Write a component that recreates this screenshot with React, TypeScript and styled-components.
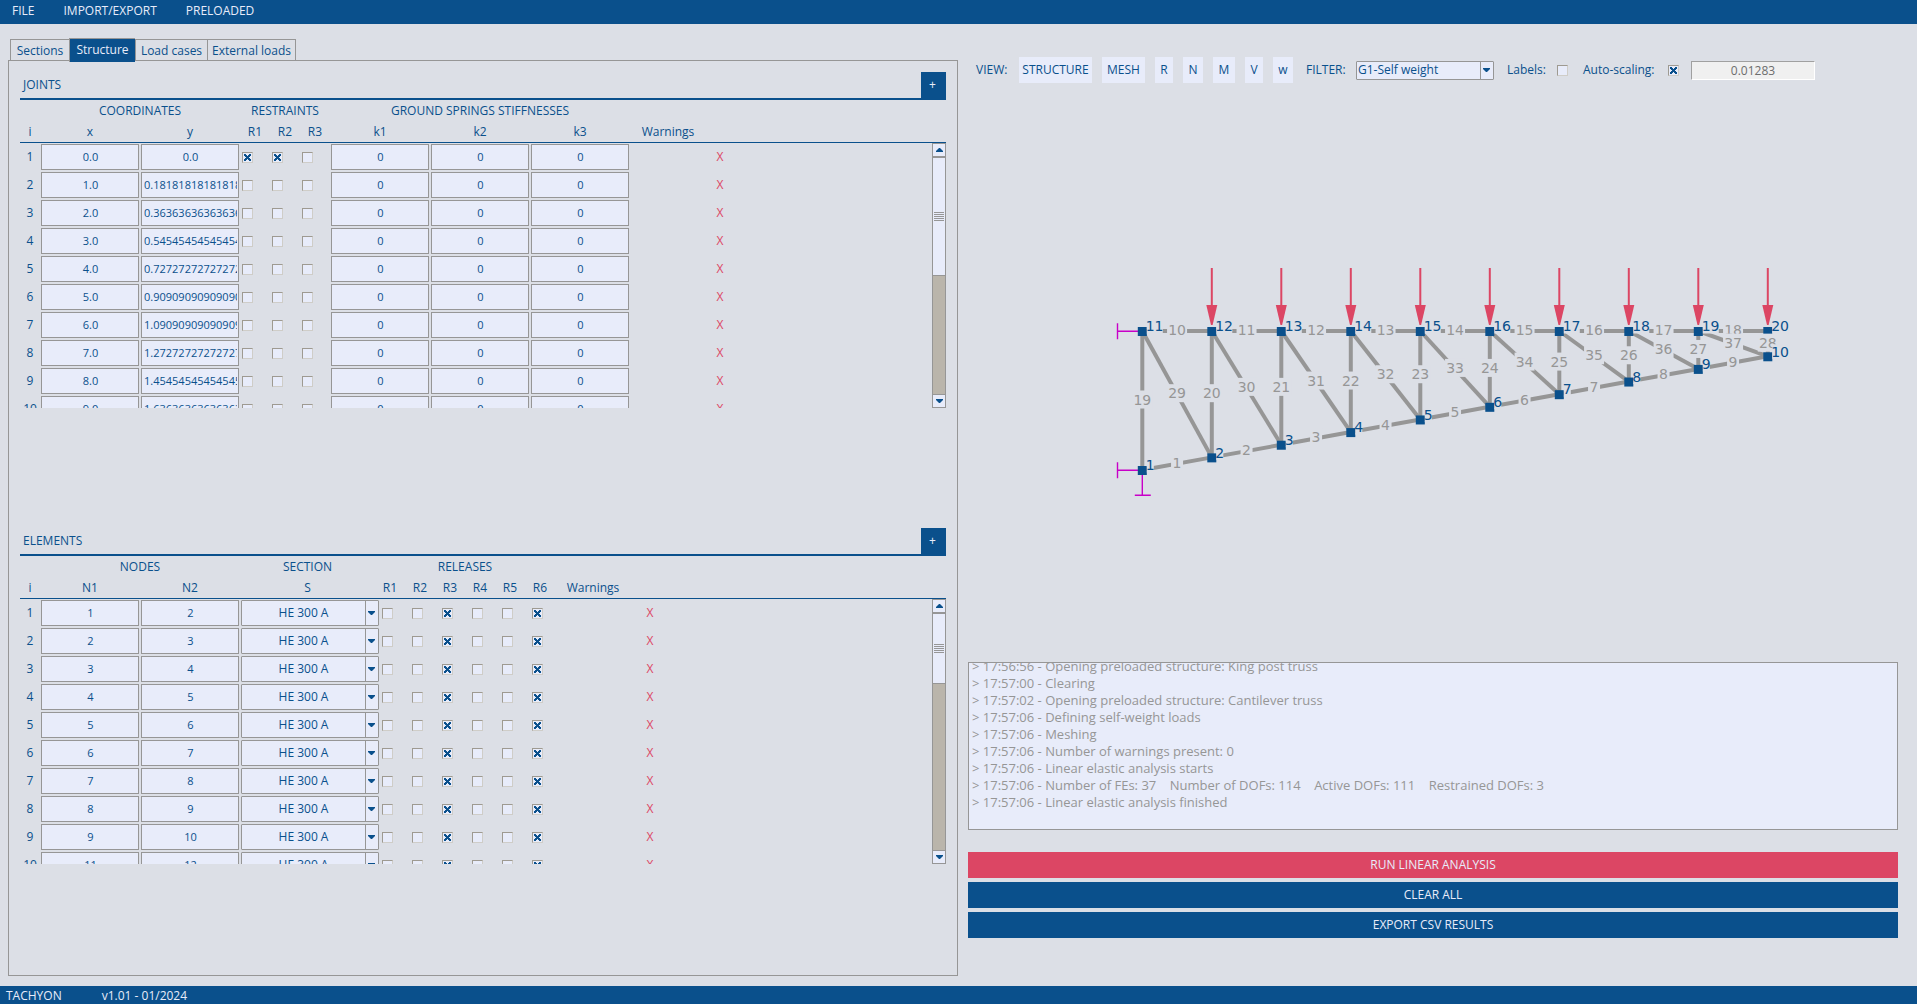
import React from "react";
import styled, { createGlobalStyle } from "styled-components";

const c = {
  blue: "#0a508c",
  bg: "#dcdfe6",
  field: "#e8ecfa",
  red: "#dc4664",
  grey: "#969696",
  trough: "#bab5ab",
  magenta: "#c800c8",
};

const svgUrl = (body: string, w: number, h: number) =>
  `url("data:image/svg+xml,${encodeURIComponent(
    `<svg xmlns='http://www.w3.org/2000/svg' width='${w}' height='${h}' viewBox='0 0 ${w} ${h}'>${body}</svg>`
  )}")`;

const crossMark = svgUrl(
  `<path d='M0 0H2V1H3V2H4V1H5V0H7V2H6V3H5V4H6V5H7V7H5V6H4V5H3V6H2V7H0V5H1V4H2V3H1V2H0Z' fill='${c.blue}'/>`,
  7,
  7
);
const downArrow = svgUrl(`<path d='M0 0H7V1L4 4H3L0 1Z' fill='${c.blue}'/>`, 7, 4);

const GlobalStyle = createGlobalStyle`
  *, *::before, *::after { box-sizing: border-box; }
  body { margin: 0; background: ${c.bg}; }
  body, button, input, select, table {
    font-family: "Open Sans", "Noto Sans", sans-serif;
    font-size: 12px;
    line-height: 16px;
    color: ${c.blue};
  }
`;

const Page = styled.div`
  min-height: 100vh;
  display: flex;
  flex-direction: column;
`;

const MenuBar = styled.nav`
  display: flex;
  height: 24px;
  padding: 0 8px;
  gap: 21px;
  background: ${c.blue};
`;

const MenuButton = styled.button`
  border: 0;
  padding: 0 4px 2px;
  background: none;
  color: ${c.field};
`;

const Main = styled.main`
  flex: 1;
  display: grid;
  grid-template-columns: minmax(0, 958fr) minmax(0, 959fr);
`;

const LeftPane = styled.div`
  display: flex;
  flex-direction: column;
  padding: 14px 0 10px 8px;
`;

const TabList = styled.div`
  display: grid;
  grid-template-columns: 59px 66px 72px 89px;
  align-items: end;
  padding-left: 2px;
`;

const Tab = styled.button<{ $active?: boolean }>`
  position: relative;
  height: ${(p) => (p.$active ? 24 : 21)}px;
  margin-bottom: ${(p) => (p.$active ? -2 : 0)}px;
  padding: ${(p) => (p.$active ? "0 0 1px" : "2px 0 0")};
  border: solid ${c.grey};
  border-width: 1px 0 0 1px;
  background: ${(p) => (p.$active ? c.blue : "none")};
  color: ${(p) => (p.$active ? c.field : c.blue)};
  white-space: nowrap;
  &:last-child { border-right-width: 1px; }
`;

const TabPanel = styled.div`
  flex: 1;
  display: grid;
  grid-template-rows: 1fr 1fr;
  border: 1px solid ${c.grey};
  padding: 0 11px 2px;
`;

const Section = styled.section`
  padding-top: 11px;
`;

const SectionHead = styled.header`
  display: flex;
  justify-content: space-between;
  border-bottom: 2px solid ${c.blue};
`;

const SectionTitle = styled.h2`
  margin: 0;
  padding: 5px 3px;
  font-size: 12px;
  font-weight: 400;
  line-height: 16px;
`;

const AddButton = styled.button`
  width: 25px;
  height: 26px;
  border: 0;
  padding: 0 2px 0 0;
  background: ${c.blue};
  color: ${c.field};
`;

const HeadTable = styled.table`
  display: block;
  border-bottom: 1px solid ${c.blue};
`;

const Rows = styled.tbody`
  display: block;
`;

const HeadRows = styled.thead`
  display: block;
`;

const GridRow = styled.tr<{ $columns: string }>`
  display: grid;
  grid-template-columns: ${(p) => p.$columns};
  align-items: center;
  height: 28px;
`;

const HeadRow = styled(GridRow)`
  height: 21px;
`;

const Th = styled.th<{ $span?: number }>`
  padding: 0;
  font-weight: 400;
  text-align: center;
  white-space: nowrap;
  grid-column: span ${(p) => p.$span ?? 1};
`;

const Td = styled.td<{ $align?: string }>`
  display: flex;
  justify-content: ${(p) => p.$align ?? "center"};
  padding: 0 1px;
`;

const BodyArea = styled.div`
  display: flex;
  height: 265px;
`;

const Viewport = styled.div`
  flex: 1;
  min-width: 0;
  overflow: hidden;
`;

const BodyTable = styled.table`
  display: block;
`;

const Field = styled.input`
  width: 100%;
  height: 26px;
  padding: 0 1px 1px 2px;
  border: 1px solid ${c.grey};
  background: ${c.field};
  font-size: 11px;
  text-align: center;
`;

const Check = styled.input.attrs({ type: "checkbox" })`
  appearance: none;
  flex: none;
  width: 11px;
  height: 11px;
  margin: 1px 1px 0;
  border: 1px solid;
  border-color: #9e9a91 #cfcdc8 #cfcdc8 #9e9a91;
  background: ${c.field} center / 7px 7px no-repeat;
  &:checked { background-image: ${crossMark}; }
`;

const Select = styled.select<{ $compact?: boolean }>`
  appearance: none;
  width: ${(p) => (p.$compact ? "138px" : "100%")};
  height: ${(p) => (p.$compact ? 19 : 26)}px;
  padding: 0 14px 0 1px;
  border: 1px solid ${c.grey};
  border-radius: 1px;
  background: ${downArrow} right 3px center no-repeat,
    linear-gradient(${c.grey}, ${c.grey}) right 12px top / 1px 100% no-repeat, ${c.field};
  text-align-last: ${(p) => (p.$compact ? "left" : "center")};
`;

const DeleteButton = styled.button`
  border: 0;
  padding: 0 4px;
  background: none;
  color: ${c.red};
`;

const Scrollbar = styled.div`
  display: flex;
  flex-direction: column;
  width: 14px;
  border: solid ${c.grey};
  border-width: 0 1px;
  background: ${c.trough};
`;

const ScrollButton = styled.button`
  display: grid;
  place-items: center;
  height: 14px;
  border: solid ${c.grey};
  border-width: 1px 0;
  padding: 0;
  background: ${c.field};
`;

const Thumb = styled.div`
  display: flex;
  flex-direction: column;
  justify-content: center;
  align-items: center;
  gap: 1px;
  border: solid ${c.grey};
  border-width: 1px 0;
  background: ${c.field};
`;

const GripLine = styled.span`
  width: 10px;
  height: 1px;
  background: ${c.grey};
`;

const Spacer = styled.div`
  flex: 1;
`;

const RightPane = styled.div`
  display: flex;
  flex-direction: column;
  padding: 33px 19px 48px 10px;
`;

const Toolbar = styled.div`
  display: flex;
  align-items: center;
  height: 26px;
  padding-left: 8px;
  white-space: nowrap;
`;

const ToolLabel = styled.label<{ $width: number }>`
  width: ${(p) => p.$width}px;
`;

const ViewButtons = styled.div`
  display: flex;
  gap: 10px;
  margin-right: 13px;
`;

const ViewButton = styled.button<{ $width: number }>`
  width: ${(p) => p.$width}px;
  height: 26px;
  border: 0;
  padding: 0;
  background: ${c.field};
`;

const ToolItem = styled.div<{ $gap: number }>`
  display: flex;
  align-items: center;
  margin-right: ${(p) => p.$gap}px;
`;

const ScaleField = styled.input`
  width: 124px;
  height: 19px;
  padding: 0;
  border: 1px solid;
  border-color: #a0a0a0 #fff #fff #a0a0a0;
  background: #f0f0f0;
  color: #6d6d6d;
  text-align: center;
`;

const Canvas = styled.svg`
  flex: 1;
  width: 100%;
  min-height: 0;
  font-family: "DejaVu Sans", sans-serif;
  font-size: 14px;
`;

const Log = styled.div`
  display: flex;
  flex-direction: column;
  justify-content: flex-end;
  height: 168px;
  padding: 0 3px 18px;
  border: 1px solid ${c.grey};
  background: ${c.field};
  color: ${c.grey};
  font-size: 13px;
  line-height: 17px;
  white-space: pre;
  overflow: hidden;
`;

const LogLine = styled.div`
  flex: none;
`;

const Actions = styled.div`
  display: grid;
  gap: 4px;
  margin-top: 22px;
`;

const ActionButton = styled.button<{ $primary?: boolean }>`
  height: 26px;
  border: 0;
  background: ${(p) => (p.$primary ? c.red : c.blue)};
  color: ${c.field};
`;

const StatusBar = styled.footer`
  display: flex;
  gap: 40px;
  height: 18px;
  padding: 2px 6px 0;
  background: ${c.blue};
  color: ${c.field};
`;

type Column = { kind: "field" | "check" | "select"; label: string };

type DataTableProps = {
  title: string;
  groups: { label: string; span: number }[];
  columns: Column[];
  headColumns: string;
  bodyColumns: string;
  rows: (string | boolean)[][];
  thumb: number;
};

function ScrollArrow({ up }: { up?: boolean }) {
  return (
    <svg width="7" height="4" viewBox="0 0 7 4" aria-hidden="true">
      <path d={up ? "M0 4H7V3L4 0H3L0 3Z" : "M0 0H7V1L4 4H3L0 1Z"} fill={c.blue} />
    </svg>
  );
}

function DataTable({ title, groups, columns, headColumns, bodyColumns, rows, thumb }: DataTableProps) {
  return (
    <Section>
      <SectionHead>
        <SectionTitle>{title}</SectionTitle>
        <AddButton>+</AddButton>
      </SectionHead>
      <HeadTable>
        <HeadRows>
          <HeadRow $columns={headColumns}>
            <Th as="td" />
            {groups.map((g) => (
              <Th key={g.label} $span={g.span}>{g.label}</Th>
            ))}
          </HeadRow>
          <HeadRow $columns={headColumns}>
            <Th>i</Th>
            {columns.map((col) => (
              <Th key={col.label}>{col.label}</Th>
            ))}
            <Th>Warnings</Th>
          </HeadRow>
        </HeadRows>
      </HeadTable>
      <BodyArea>
        <Viewport>
          <BodyTable>
            <Rows>
              {rows.map((row, r) => (
                <GridRow key={r} $columns={bodyColumns}>
                  <Td>{r + 1}</Td>
                  {columns.map((col, k) => {
                    const name = `${title} ${r + 1} ${col.label}`;
                    if (col.kind === "check")
                      return (
                        <Td key={col.label} $align="flex-start">
                          <Check aria-label={name} defaultChecked={row[k] as boolean} />
                        </Td>
                      );
                    if (col.kind === "select")
                      return (
                        <Td key={col.label}>
                          <Select aria-label={name}><option>{row[k]}</option></Select>
                        </Td>
                      );
                    return (
                      <Td key={col.label}>
                        <Field aria-label={name} defaultValue={row[k] as string} />
                      </Td>
                    );
                  })}
                  <Td />
                  <Td><DeleteButton>X</DeleteButton></Td>
                </GridRow>
              ))}
            </Rows>
          </BodyTable>
        </Viewport>
        <Scrollbar>
          <ScrollButton aria-label="Scroll up"><ScrollArrow up /></ScrollButton>
          <Thumb style={{ height: thumb }}>
            {[0, 1, 2, 3, 4].map((n) => <GripLine key={n} />)}
          </Thumb>
          <Spacer />
          <ScrollButton aria-label="Scroll down"><ScrollArrow /></ScrollButton>
        </Scrollbar>
      </BodyArea>
    </Section>
  );
}

const jointColumns: Column[] = [
  { kind: "field", label: "x" },
  { kind: "field", label: "y" },
  { kind: "check", label: "R1" },
  { kind: "check", label: "R2" },
  { kind: "check", label: "R3" },
  { kind: "field", label: "k1" },
  { kind: "field", label: "k2" },
  { kind: "field", label: "k3" },
];

const jointRows = Array.from({ length: 10 }, (_, i) => [
  `${i}.0`,
  i === 0 ? "0.0" : String((i * 2) / 11),
  i === 0,
  i === 0,
  false,
  "0",
  "0",
  "0",
]);

const elementColumns: Column[] = [
  { kind: "field", label: "N1" },
  { kind: "field", label: "N2" },
  { kind: "select", label: "S" },
  ...["R1", "R2", "R3", "R4", "R5", "R6"].map((label) => ({ kind: "check" as const, label })),
];

const elementRows = Array.from({ length: 10 }, (_, i) => {
  const first = i < 9 ? i + 1 : i + 2;
  return [String(first), String(first + 1), "HE 300 A", false, false, true, false, false, true];
});

/* Truss geometry, one unit of structure = UNIT drawing units */
const UNIT = 69.5;
const ORIGIN = { x: 1142.3, y: 470 };
type Point = { x: number; y: number };
const bottom: Point[] = Array.from({ length: 10 }, (_, i) => ({
  x: ORIGIN.x + i * UNIT,
  y: ORIGIN.y - ((i * 2) / 11) * UNIT,
}));
const top: Point[] = bottom.map((p) => ({ x: p.x, y: ORIGIN.y - 2 * UNIT }));
const nodes = [...bottom, ...top];
const bars: [Point, Point][] = [
  ...bottom.slice(1).map((p, i): [Point, Point] => [bottom[i], p]),
  ...top.slice(1).map((p, i): [Point, Point] => [top[i], p]),
  ...bottom.map((p, i): [Point, Point] => [p, top[i]]),
  ...bottom.slice(1).map((p, i): [Point, Point] => [top[i], p]),
];

function Truss() {
  return (
    <Canvas viewBox="968 83 930 579" role="img" aria-label="Cantilever truss">
      {bars.map(([a, b], i) => (
        <line key={i} x1={a.x} y1={a.y} x2={b.x} y2={b.y} stroke={c.grey} strokeWidth="4" />
      ))}
      <g stroke={c.magenta} strokeWidth="1.4" fill="none">
        <path d={`M${top[0].x} ${top[0].y + 0.3}h-24.8m0 -8v16`} />
        <path d={`M${bottom[0].x} ${bottom[0].y + 0.3}h-24.8m0 -8v16`} />
        <path d={`M${bottom[0].x} ${bottom[0].y}v25.2m-7.5 0h16`} />
      </g>
      {top.slice(1).map((p) => (
        <g key={p.x} fill={c.red}>
          <line x1={p.x} x2={p.x} y1={268} y2={306} stroke={c.red} strokeWidth="2" />
          <path d={`M${p.x - 5.5} 305h11L${p.x + 0.8} 325h-1.6Z`} />
        </g>
      ))}
      {nodes.map((p, i) => (
        <rect key={i} x={p.x - 4.5} y={p.y - 4} width="9" height="9" fill={c.blue} />
      ))}
      {bars.map(([a, b], i) => {
        const x = (a.x + b.x) / 2;
        const y = (a.y + b.y) / 2;
        const w = i < 9 ? 12 : 20;
        return (
          <g key={i}>
            <rect x={x - w / 2} y={y - 10} width={w} height="18" fill={c.bg} />
            <text x={x} y={y + 4} textAnchor="middle" fill={c.grey}>{i + 1}</text>
          </g>
        );
      })}
      {nodes.map((p, i) => (
        <g key={i}>
          <rect x={p.x + 4.5} y={p.y - 12} width={i < 9 ? 7 : 16} height="14.5" fill={c.bg} />
          <text x={p.x + 3.4} y={p.y + 0.3} fill={c.blue}>{i + 1}</text>
        </g>
      ))}
    </Canvas>
  );
}

const views: [string, number][] = [
  ["STRUCTURE", 73],
  ["MESH", 43],
  ["R", 18],
  ["N", 20],
  ["M", 22],
  ["V", 18],
  ["w", 20],
];

const logLines = [
  "17:56:56 - Opening preloaded structure: King post truss",
  "17:57:00 - Clearing",
  "17:57:02 - Opening preloaded structure: Cantilever truss",
  "17:57:06 - Defining self-weight loads",
  "17:57:06 - Meshing",
  "17:57:06 - Number of warnings present: 0",
  "17:57:06 - Linear elastic analysis starts",
  "17:57:06 - Number of FEs: 37    Number of DOFs: 114    Active DOFs: 111    Restrained DOFs: 3",
  "17:57:06 - Linear elastic analysis finished",
];

export default function App() {
  return (
    <Page>
      <GlobalStyle />
      <MenuBar>
        <MenuButton>FILE</MenuButton>
        <MenuButton>IMPORT/EXPORT</MenuButton>
        <MenuButton>PRELOADED</MenuButton>
      </MenuBar>
      <Main>
        <LeftPane>
          <TabList role="tablist">
            {["Sections", "Structure", "Load cases", "External loads"].map((t) => (
              <Tab key={t} role="tab" aria-selected={t === "Structure"} $active={t === "Structure"}>
                {t}
              </Tab>
            ))}
          </TabList>
          <TabPanel role="tabpanel">
            <DataTable
              title="JOINTS"
              groups={[
                { label: "COORDINATES", span: 2 },
                { label: "RESTRAINTS", span: 3 },
                { label: "GROUND SPRINGS STIFFNESSES", span: 3 },
              ]}
              columns={jointColumns}
              headColumns="20px repeat(2, 100px) repeat(3, 30px) repeat(3, 100px) 76px"
              bodyColumns="20px repeat(2, 100px) repeat(3, 30px) repeat(3, 100px) 76px 28px"
              rows={jointRows}
              thumb={119}
            />
            <DataTable
              title="ELEMENTS"
              groups={[
                { label: "NODES", span: 2 },
                { label: "SECTION", span: 1 },
                { label: "RELEASES", span: 6 },
              ]}
              columns={elementColumns}
              headColumns="20px repeat(2, 100px) 135px repeat(6, 30px) 76px"
              bodyColumns="20px repeat(2, 100px) 140px repeat(6, 30px) 76px 28px"
              rows={elementRows}
              thumb={71}
            />
          </TabPanel>
        </LeftPane>
        <RightPane>
          <Toolbar>
            <ToolLabel as="span" $width={43}>VIEW:</ToolLabel>
            <ViewButtons>
              {views.map(([label, width]) => (
                <ViewButton key={label} $width={width}>{label}</ViewButton>
              ))}
            </ViewButtons>
            <ToolItem $gap={13}>
              <ToolLabel htmlFor="filter" $width={50}>FILTER:</ToolLabel>
              <Select id="filter" $compact><option>G1-Self weight</option></Select>
            </ToolItem>
            <ToolItem $gap={14}>
              <ToolLabel htmlFor="labels" $width={49}>Labels:</ToolLabel>
              <Check id="labels" />
            </ToolItem>
            <ToolItem $gap={11}>
              <ToolLabel htmlFor="autoscale" $width={84}>Auto-scaling:</ToolLabel>
              <Check id="autoscale" defaultChecked />
            </ToolItem>
            <ScaleField aria-label="Scale" defaultValue="0.01283" readOnly />
          </Toolbar>
          <Truss />
          <Log role="log">
            {logLines.map((line) => (
              <LogLine key={line}>{`> ${line}`}</LogLine>
            ))}
          </Log>
          <Actions>
            <ActionButton $primary>RUN LINEAR ANALYSIS</ActionButton>
            <ActionButton>CLEAR ALL</ActionButton>
            <ActionButton>EXPORT CSV RESULTS</ActionButton>
          </Actions>
        </RightPane>
      </Main>
      <StatusBar>
        <span>TACHYON</span>
        <span>v1.01 - 01/2024</span>
      </StatusBar>
    </Page>
  );
}
